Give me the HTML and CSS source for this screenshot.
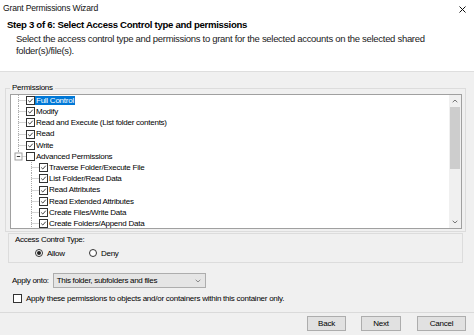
FILE: index.html
```html
<!DOCTYPE html>
<html>
<head>
<meta charset="utf-8">
<title>Grant Permissions Wizard</title>
<link rel="stylesheet" href="styles.css">
</head>
<body>
<div class="win">
  <header class="top">
    <div class="titlebar">
      <span class="title">Grant Permissions Wizard</span>
      <svg class="close" viewBox="0 0 7 7"><path d="M0.5 0.5L6.5 6.5M6.5 0.5L0.5 6.5"/></svg>
    </div>
    <div class="step">Step 3 of 6: Select Access Control type and permissions</div>
    <div class="desc">Select the access control type and permissions to grant for the selected accounts on the selected shared<br>folder(s)/file(s).</div>
  </header>

  <main class="main">
    <fieldset class="perms">
      <legend>Permissions</legend>
      <div class="tree">
        <div class="tree-list">
          <div class="row">
            <svg class="guide g1" viewBox="0 0 15 11.2"><path d="M7.5 0V11.2M7.5 5.5H15"/></svg>
            <span class="cb"><svg viewBox="0 0 9 9"><path d="M1.6 4.5L3.6 6.5L7.4 2.2"/></svg></span>
            <span class="lbl sel">Full Control</span>
          </div>
          <div class="row">
            <svg class="guide g1" viewBox="0 0 15 11.2"><path d="M7.5 0V11.2M7.5 5.5H15"/></svg>
            <span class="cb"><svg viewBox="0 0 9 9"><path d="M1.6 4.5L3.6 6.5L7.4 2.2"/></svg></span>
            <span class="lbl">Modify</span>
          </div>
          <div class="row">
            <svg class="guide g1" viewBox="0 0 15 11.2"><path d="M7.5 0V11.2M7.5 5.5H15"/></svg>
            <span class="cb"><svg viewBox="0 0 9 9"><path d="M1.6 4.5L3.6 6.5L7.4 2.2"/></svg></span>
            <span class="lbl">Read and Execute (List folder contents)</span>
          </div>
          <div class="row">
            <svg class="guide g1" viewBox="0 0 15 11.2"><path d="M7.5 0V11.2M7.5 5.5H15"/></svg>
            <span class="cb"><svg viewBox="0 0 9 9"><path d="M1.6 4.5L3.6 6.5L7.4 2.2"/></svg></span>
            <span class="lbl">Read</span>
          </div>
          <div class="row">
            <svg class="guide g1" viewBox="0 0 15 11.2"><path d="M7.5 0V11.2M7.5 5.5H15"/></svg>
            <span class="cb"><svg viewBox="0 0 9 9"><path d="M1.6 4.5L3.6 6.5L7.4 2.2"/></svg></span>
            <span class="lbl">Write</span>
          </div>
          <div class="row">
            <svg class="guide g1" viewBox="0 0 15 11.2"><path d="M7.5 0V2M10.5 5.5H15"/><rect class="exp" x="4" y="2" width="7" height="7"/><path class="minus" d="M5.8 5.5H9.2"/></svg>
            <span class="cb"></span>
            <span class="lbl">Advanced Permissions</span>
          </div>
          <div class="row">
            <svg class="guide g2" viewBox="0 0 28 11.2"><path d="M20.5 0V11.2M20.5 5.5H28"/></svg>
            <span class="cb"><svg viewBox="0 0 9 9"><path d="M1.6 4.5L3.6 6.5L7.4 2.2"/></svg></span>
            <span class="lbl">Traverse Folder/Execute File</span>
          </div>
          <div class="row">
            <svg class="guide g2" viewBox="0 0 28 11.2"><path d="M20.5 0V11.2M20.5 5.5H28"/></svg>
            <span class="cb"><svg viewBox="0 0 9 9"><path d="M1.6 4.5L3.6 6.5L7.4 2.2"/></svg></span>
            <span class="lbl">List Folder/Read Data</span>
          </div>
          <div class="row">
            <svg class="guide g2" viewBox="0 0 28 11.2"><path d="M20.5 0V11.2M20.5 5.5H28"/></svg>
            <span class="cb"><svg viewBox="0 0 9 9"><path d="M1.6 4.5L3.6 6.5L7.4 2.2"/></svg></span>
            <span class="lbl">Read Attributes</span>
          </div>
          <div class="row">
            <svg class="guide g2" viewBox="0 0 28 11.2"><path d="M20.5 0V11.2M20.5 5.5H28"/></svg>
            <span class="cb"><svg viewBox="0 0 9 9"><path d="M1.6 4.5L3.6 6.5L7.4 2.2"/></svg></span>
            <span class="lbl">Read Extended Attributes</span>
          </div>
          <div class="row">
            <svg class="guide g2" viewBox="0 0 28 11.2"><path d="M20.5 0V11.2M20.5 5.5H28"/></svg>
            <span class="cb"><svg viewBox="0 0 9 9"><path d="M1.6 4.5L3.6 6.5L7.4 2.2"/></svg></span>
            <span class="lbl">Create Files/Write Data</span>
          </div>
          <div class="row">
            <svg class="guide g2" viewBox="0 0 28 11.2"><path d="M20.5 0V11.2M20.5 5.5H28"/></svg>
            <span class="cb"><svg viewBox="0 0 9 9"><path d="M1.6 4.5L3.6 6.5L7.4 2.2"/></svg></span>
            <span class="lbl">Create Folders/Append Data</span>
          </div>
        </div>
        <div class="vscroll">
          <div class="sb-btn"><svg viewBox="0 0 7 4"><path d="M0.8 3.4L3.5 0.9L6.2 3.4"/></svg></div>
          <div class="sb-track"><div class="sb-thumb"></div></div>
          <div class="sb-btn"><svg viewBox="0 0 7 4"><path d="M0.8 0.6L3.5 3.1L6.2 0.6"/></svg></div>
        </div>
      </div>
    </fieldset>

    <div class="act">
      <div class="act-label">Access Control Type:</div>
      <div class="radios">
        <label class="radio allow"><span class="rb on"></span>Allow</label>
        <label class="radio"><span class="rb"></span>Deny</label>
      </div>
    </div>

    <div class="apply">
      <span class="apply-label">Apply onto:</span>
      <div class="combo">
        <span>This folder, subfolders and files</span>
        <svg class="chev" viewBox="0 0 7 4"><path d="M0.8 0.6L3.5 3.1L6.2 0.6"/></svg>
      </div>
    </div>

    <label class="chkrow"><span class="cb plain"></span>Apply these permissions to objects and/or containers within this container only.</label>
  </main>

  <footer class="foot">
    <button class="btn back">Back</button>
    <button class="btn next">Next</button>
    <button class="btn cancel">Cancel</button>
  </footer>
</div>
</body>
</html>
```

FILE: styles.css
```css
* { box-sizing: border-box; }

body {
  margin: 0;
  width: 474px;
  height: 335px;
  overflow: hidden;
  background: #f0f0f0;
  font-family: "Liberation Sans", Arial, sans-serif;
  color: #000;
}

.win {
  display: flex;
  flex-direction: column;
  height: 335px;
}

/* ---------- header ---------- */
.top {
  flex: none;
  height: 72px;
  background: #fff;
  border-bottom: 1px solid #dedede;
}

.titlebar {
  height: 16px;
  display: flex;
  align-items: center;
  justify-content: space-between;
  padding: 0 8px 0 3px;
  font-size: 8.6px;
  letter-spacing: -0.2px;
  color: #111;
}

.close {
  width: 7px;
  height: 7px;
  margin-top: 2px;
  fill: none;
  stroke: #111;
  stroke-width: 1;
}

.step {
  font-weight: bold;
  font-size: 9.6px;
  letter-spacing: -0.3px;
  line-height: 12px;
  margin: 3px 0 0 7px;
  white-space: nowrap;
}

.desc {
  font-size: 9.5px;
  letter-spacing: -0.3px;
  line-height: 12px;
  margin: 2px 0 0 16px;
  color: #1a1a1a;
  white-space: nowrap;
}

/* ---------- main ---------- */
.main {
  flex: none;
  height: 240px;
  display: flex;
  flex-direction: column;
}

.perms {
  margin: 11px 8px 0 5px;
  padding: 1px 3px 2px 4px;
  border: 1px solid #dcdcdc;
  min-width: 0;
}

.perms legend {
  font-size: 8px;
  letter-spacing: -0.25px;
  line-height: 10px;
  padding: 0 2px;
}

.tree {
  display: flex;
  height: 135px;
  border: 1px solid #a0a0a0;
  background: #fff;
}

.tree-list {
  flex: 1;
  overflow: hidden;
  font-size: 8px;
  letter-spacing: -0.25px;
}

.row {
  display: flex;
  align-items: center;
  height: 11.2px;
  white-space: nowrap;
}

.guide {
  flex: none;
  height: 11.2px;
  fill: none;
  stroke: #a8a8a8;
  stroke-width: 1;
  stroke-dasharray: 1 1;
}
.g1 { width: 15px; }
.g2 { width: 28px; }

.guide .exp {
  fill: #fff;
  stroke: #a0a0a0;
  stroke-dasharray: none;
}
.guide .minus {
  stroke: #333;
  stroke-dasharray: none;
}

.cb {
  flex: none;
  width: 9px;
  height: 9px;
  border: 1px solid #333;
  background: #fff;
  display: flex;
}
.cb svg {
  width: 7px;
  height: 7px;
  fill: none;
  stroke: #222;
  stroke-width: 1.1;
}

.lbl {
  padding: 0 1px;
  line-height: 9.5px;
}
.lbl.sel {
  background: #0078d7;
  color: #fff;
}

.vscroll {
  flex: none;
  width: 12px;
  background: #f0f0f0;
  display: flex;
  flex-direction: column;
}
.sb-btn {
  flex: none;
  height: 12px;
  display: flex;
  align-items: center;
  justify-content: center;
}
.sb-btn svg {
  width: 6px;
  height: 4px;
  fill: none;
  stroke: #606060;
  stroke-width: 1;
}
.sb-track {
  flex: 1;
  padding: 0 1px;
}
.sb-thumb {
  height: 62px;
  background: #cdcdcd;
}

/* ---------- access control type ---------- */
.act {
  margin: 1px 11px 0 8px;
  height: 30px;
  border: 1px solid #dcdcdc;
  padding: 1px 0 0 6px;
  font-size: 8px;
  letter-spacing: -0.3px;
}
.act-label {
  line-height: 10px;
}
.radios {
  display: flex;
  align-items: center;
  height: 10px;
  margin-top: 3px;
  padding-left: 20px;
}
.radio {
  display: flex;
  align-items: center;
  gap: 4px;
}
.radio.allow { width: 54px; }
.rb {
  flex: none;
  width: 8px;
  height: 8px;
  border: 1px solid #333;
  border-radius: 50%;
  background: #fff;
  display: flex;
  align-items: center;
  justify-content: center;
}
.rb.on::after {
  content: "";
  width: 4px;
  height: 4px;
  border-radius: 50%;
  background: #222;
}

/* ---------- apply onto ---------- */
.apply {
  display: flex;
  align-items: center;
  gap: 4px;
  margin-top: 10px;
  height: 15px;
  padding-left: 12px;
  font-size: 8px;
  letter-spacing: -0.3px;
}
.combo {
  width: 153px;
  height: 15px;
  border: 1px solid #adadad;
  background: #e5e5e5;
  display: flex;
  align-items: center;
  justify-content: space-between;
  padding: 0 4px 0 3px;
}
.chev {
  width: 6px;
  height: 4px;
  fill: none;
  stroke: #7a7a7a;
  stroke-width: 1;
}

.chkrow {
  display: flex;
  align-items: center;
  gap: 4px;
  margin-top: 5px;
  height: 10px;
  padding-left: 13px;
  font-size: 8px;
  letter-spacing: -0.25px;
  white-space: nowrap;
}

/* ---------- footer ---------- */
.foot {
  flex: 1;
  border-top: 1px solid #dadada;
  display: flex;
  justify-content: flex-end;
  align-items: flex-start;
  padding: 3px 8px 0 0;
}

.btn {
  height: 15px;
  padding: 0;
  margin: 0;
  border: 1px solid #adadad;
  background: #e1e1e1;
  font-family: "Liberation Sans", Arial, sans-serif;
  font-size: 8px;
  letter-spacing: -0.2px;
  color: #000;
}
.back { width: 39px; }
.next { width: 40px; margin-left: 15px; }
.cancel { width: 49px; margin-left: 16px; }
```
